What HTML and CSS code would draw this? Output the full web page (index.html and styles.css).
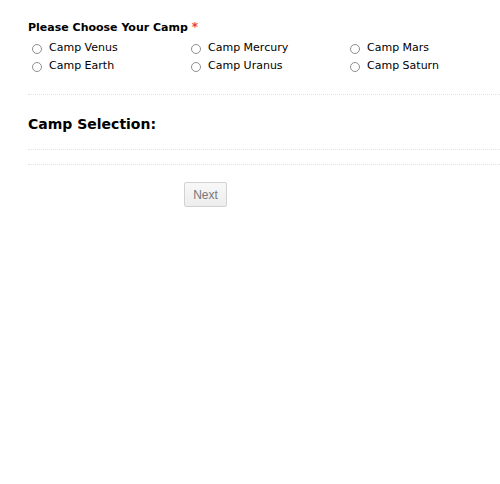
FILE: index.html
```html
<!DOCTYPE html>
<html>
<head>
<meta charset="utf-8">
<link rel="stylesheet" href="styles.css">
</head>
<body>
<div class="form">
  <div class="question">
    <div class="label">Please Choose Your Camp <span class="req">*</span></div>
    <div class="options">
      <label class="opt"><span class="radio"></span>Camp Venus</label>
      <label class="opt"><span class="radio"></span>Camp Mercury</label>
      <label class="opt"><span class="radio"></span>Camp Mars</label>
      <label class="opt"><span class="radio"></span>Camp Earth</label>
      <label class="opt"><span class="radio"></span>Camp Uranus</label>
      <label class="opt"><span class="radio"></span>Camp Saturn</label>
    </div>
  </div>
  <div class="divider"></div>
  <h2 class="section">Camp Selection:</h2>
  <div class="divider d2"></div>
  <div class="divider d3"></div>
  <div class="buttons">
    <button class="next">Next</button>
  </div>
</div>
</body>
</html>
```
FILE: styles.css
```css
html, body {
  margin: 0;
  padding: 0;
  background: #fff;
}
body {
  font-family: "DejaVu Sans", Verdana, sans-serif;
  color: #000;
}
.form {
  padding: 20px 0 0 28px;
}
.label {
  font-size: 11px;
  font-weight: bold;
  line-height: 15px;
}
.req {
  color: #f23a3a;
  font-size: 12px;
}
.options {
  display: grid;
  grid-template-columns: 159px 159px 154px;
  row-gap: 3px;
  margin-top: 5px;
}
.opt {
  display: flex;
  align-items: center;
  font-size: 11px;
  line-height: 15px;
  height: 15px;
}
.radio {
  width: 10px;
  height: 10px;
  border: 1px solid #8f8f8f;
  border-radius: 50%;
  margin: 3px 7px 0 4px;
  box-sizing: border-box;
  background: #fff;
}
.divider {
  height: 0;
  border-top: 1px dotted #e2e2e2;
  margin-top: 21px;
}
.section {
  font-size: 14px;
  font-weight: bold;
  line-height: 20px;
  margin: 19px 0 0 0;
}
.d2 {
  margin-top: 15px;
}
.d3 {
  margin-top: 14px;
}
.buttons {
  padding: 17px 0 0 156px;
}
.next {
  font-family: "Liberation Sans", Arial, sans-serif;
  font-size: 12px;
  color: #777;
  background: linear-gradient(#f8f8f8, #ededed);
  border: 1px solid #d2d2d2;
  border-radius: 2px;
  width: 43px;
  height: 25px;
  padding: 0;
}
```
